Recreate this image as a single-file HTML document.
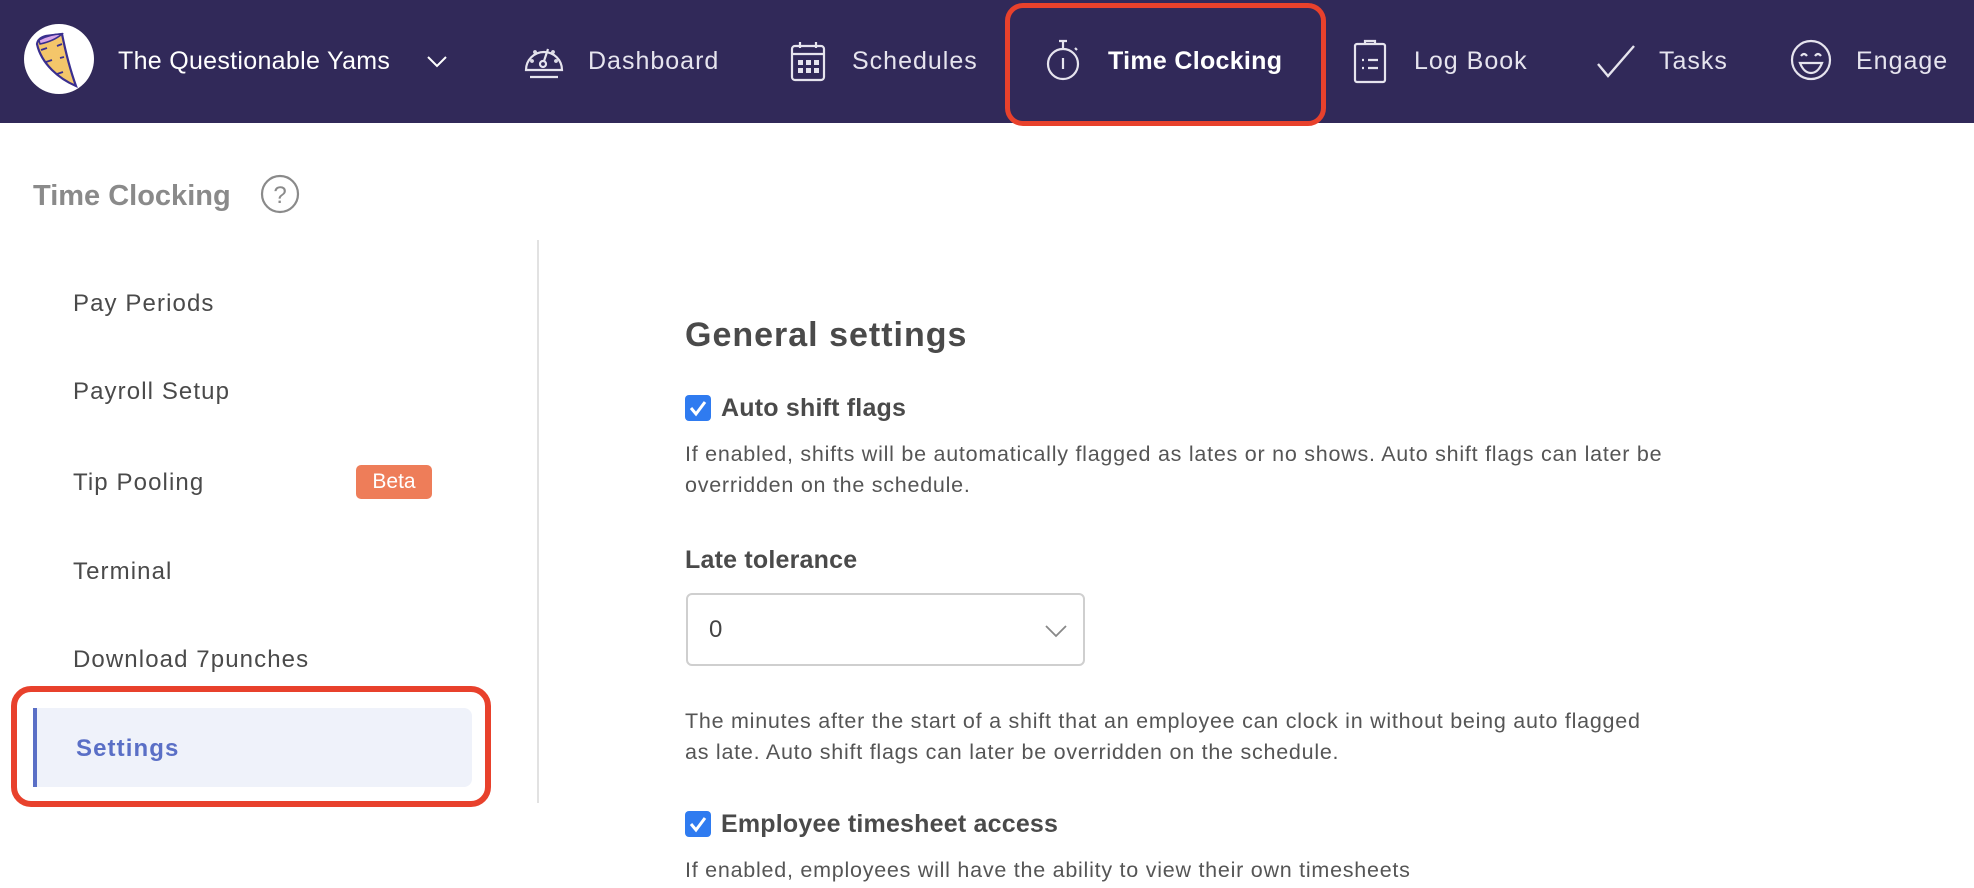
<!DOCTYPE html>
<html><head><meta charset="utf-8"><style>
*{margin:0;padding:0;box-sizing:border-box}
body{width:1974px;height:888px;overflow:hidden;background:#fff;font-family:"Liberation Sans",sans-serif;position:relative;color:#444}
.nav{position:absolute;left:0;top:0;width:1974px;height:123px;background:#312959}
.t{position:absolute;white-space:nowrap}
.nv{color:#e6e4ee;font-size:25px;top:47px;letter-spacing:1px}
svg{position:absolute}
.item{position:absolute;left:73px;font-size:24px;color:#4a4a4a;white-space:nowrap;letter-spacing:1.1px}
.desc{font-size:21.5px;color:#555;line-height:31px;letter-spacing:0.75px}
.lbl{font-size:25px;font-weight:bold;color:#4a4a4a;letter-spacing:0.2px}
.cb{position:absolute;width:26px;height:26px;background:#2f7bf0;border-radius:4px}
</style></head><body>
<div class="nav"></div>
<svg width="70" height="70" style="left:24px;top:24px" viewBox="0 0 70 70">
<circle cx="35" cy="35" r="35" fill="#fff"/>
<path d="M13 20 Q14 14 22 12 L38 10 Q44 40 52 62 Q38 56 28 46 Q16 34 13 20Z" fill="#f4c66a" stroke="#3a2f8f" stroke-width="2.2"/>
<path d="M15 16 Q26 10 38 10 Q30 17 16 20Z" fill="#d9a6e8" stroke="#3a2f8f" stroke-width="1.5"/>
<path d="M17 26 l6 -2 M33 22 l5 -2 M22 38 l6 -2 M36 34 l4 -1 M33 50 l6 -2" stroke="#3a2f8f" stroke-width="1.8" fill="none"/>
</svg>
<div class="t nv" style="left:118px;color:#fff;letter-spacing:0.3px">The Questionable Yams</div>
<svg width="22" height="14" style="left:426px;top:55px"><path d="M2 2 L11 11 L20 2" stroke="#fff" stroke-width="2" fill="none"/></svg>
<svg width="42" height="42" style="left:523px;top:40px" viewBox="0 0 42 42" fill="none" stroke="#e6e4ee" stroke-width="2.2">
<path d="M3 30 A18 18 0 1 1 39 30 L3 30Z"/><path d="M7 37 H35"/><circle cx="20" cy="24" r="3"/><path d="M21 21 L25 9"/><circle cx="9" cy="21" r=".8"/><circle cx="33" cy="21" r=".8"/><circle cx="12" cy="12" r=".8"/><circle cx="30" cy="12" r=".8"/></svg>
<div class="t nv" style="left:588px">Dashboard</div>
<svg width="36" height="42" style="left:790px;top:40px" viewBox="0 0 36 42" fill="none" stroke="#e6e4ee" stroke-width="2.2">
<rect x="2" y="6" width="32" height="34" rx="3"/><path d="M2 14 H34 M10 2 V8 M26 2 V8"/><g fill="#e6e4ee" stroke="none"><rect x="8" y="20" width="5" height="5"/><rect x="16" y="20" width="5" height="5"/><rect x="24" y="20" width="5" height="5"/><rect x="8" y="28" width="5" height="5"/><rect x="16" y="28" width="5" height="5"/><rect x="24" y="28" width="5" height="5"/></g></svg>
<div class="t nv" style="left:852px">Schedules</div>
<div style="position:absolute;left:1005px;top:3px;width:321px;height:123px;border:5px solid #e8412c;border-radius:18px"></div>
<svg width="36" height="44" style="left:1045px;top:38px" viewBox="0 0 36 44" fill="none" stroke="#e6e4ee" stroke-width="2.2">
<circle cx="18" cy="26" r="15"/><path d="M18 20 V31 M14 3 H22 M18 3 V11 M30 10 L32 12"/></svg>
<div class="t nv" style="left:1108px;color:#fff;font-weight:bold;letter-spacing:0.3px">Time Clocking</div>
<svg width="34" height="46" style="left:1353px;top:38px" viewBox="0 0 34 46" fill="none" stroke="#e6e4ee" stroke-width="2.2">
<rect x="2" y="6" width="30" height="38" rx="2"/><path d="M12 6 V3 H22 V6"/><path d="M9 22 h2 M15 22 h10 M9 30 h2 M15 30 h10"/></svg>
<div class="t nv" style="left:1414px">Log Book</div>
<svg width="40" height="36" style="left:1596px;top:44px"><path d="M2 20 L12 32 L38 2" stroke="#e6e4ee" stroke-width="2.4" fill="none"/></svg>
<div class="t nv" style="left:1659px">Tasks</div>
<svg width="42" height="42" style="left:1790px;top:39px" viewBox="0 0 42 42" fill="none" stroke="#e6e4ee" stroke-width="2.2">
<circle cx="21" cy="21" r="19"/><path d="M11 17 q3 -4 6 0 M25 17 q3 -4 6 0"/><path d="M10 24 H32 Q28 34 21 34 Q14 34 10 24Z"/></svg>
<div class="t nv" style="left:1856px">Engage</div>

<div class="t" style="left:33px;top:180px;font-size:29px;font-weight:bold;color:#8a8a8a">Time Clocking</div>
<svg width="42" height="42" style="left:259px;top:173px"><circle cx="21" cy="21" r="18" fill="none" stroke="#8a8a8a" stroke-width="2.2"/><text x="21" y="30" text-anchor="middle" font-family="Liberation Sans" font-size="24" fill="#8a8a8a">?</text></svg>
<div style="position:absolute;left:537px;top:240px;width:2px;height:563px;background:#e2e2e2"></div>
<div class="item" style="top:290px">Pay Periods</div>
<div class="item" style="top:378px">Payroll Setup</div>
<div class="item" style="top:469px">Tip Pooling</div>
<div style="position:absolute;left:356px;top:465px;width:76px;height:34px;background:#ee7d59;border-radius:5px;color:#fff;font-size:21px;text-align:center;line-height:34px">Beta</div>
<div class="item" style="top:558px">Terminal</div>
<div class="item" style="top:646px">Download 7punches</div>
<div style="position:absolute;left:33px;top:708px;width:439px;height:79px;background:#eff2fa;border-left:4px solid #5a6fc6;border-radius:0 8px 8px 0"></div>
<div class="item" style="left:76px;top:735px;color:#5a6fc6;font-weight:bold">Settings</div>
<div style="position:absolute;left:11px;top:686px;width:480px;height:121px;border:6px solid #e8412c;border-radius:20px"></div>

<div class="t" style="left:685px;top:316px;font-size:34px;font-weight:bold;color:#4a4a4a;letter-spacing:1px">General settings</div>
<div class="cb" style="left:685px;top:395px"></div>
<svg width="26" height="26" style="left:685px;top:395px"><path d="M6 13 L11 19 L20 7" stroke="#fff" stroke-width="3" fill="none"/></svg>
<div class="t lbl" style="left:721px;top:394px">Auto shift flags</div>
<div class="t desc" style="left:685px;top:439px">If enabled, shifts will be automatically flagged as lates or no shows. Auto shift flags can later be<br>overridden on the schedule.</div>
<div class="t lbl" style="left:685px;top:546px">Late tolerance</div>
<div style="position:absolute;left:686px;top:593px;width:399px;height:73px;border:2px solid #cfcfcf;border-radius:6px"></div>
<div class="t" style="left:709px;top:616px;font-size:24px;color:#444">0</div>
<svg width="24" height="14" style="left:1044px;top:624px"><path d="M2 2 L12 12 L22 2" stroke="#888" stroke-width="1.8" fill="none"/></svg>
<div class="t desc" style="left:685px;top:706px">The minutes after the start of a shift that an employee can clock in without being auto flagged<br>as late. Auto shift flags can later be overridden on the schedule.</div>
<div class="cb" style="left:685px;top:811px"></div>
<svg width="26" height="26" style="left:685px;top:811px"><path d="M6 13 L11 19 L20 7" stroke="#fff" stroke-width="3" fill="none"/></svg>
<div class="t lbl" style="left:721px;top:810px">Employee timesheet access</div>
<div class="t desc" style="left:685px;top:855px">If enabled, employees will have the ability to view their own timesheets</div>
</body></html>
